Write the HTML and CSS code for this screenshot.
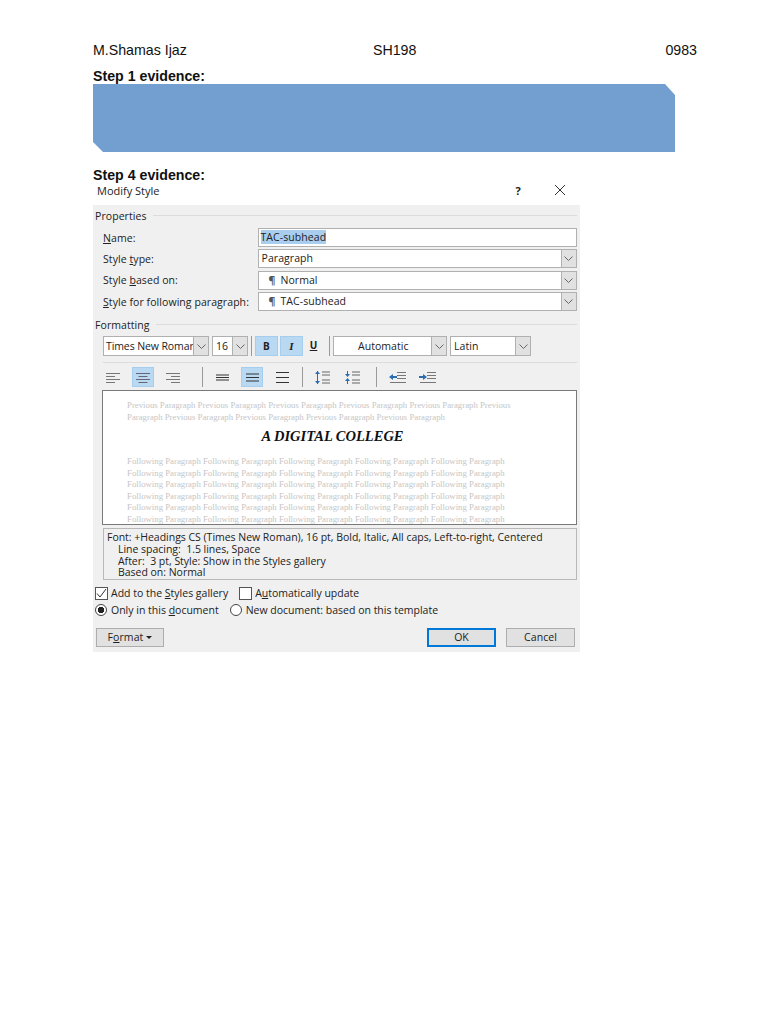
FILE: index.html
```html
<!DOCTYPE html>
<html lang="en">
<head>
<meta charset="utf-8">
<title>Evidence</title>
<link rel="stylesheet" href="styles.css">
</head>
<body>
<main class="page">
  <div class="doc-head"><span>M.Shamas Ijaz</span><span class="doc-mid">SH198</span><span class="doc-end">0983</span></div>
  <h2 class="step step-1">Step 1 evidence:</h2>
  <div class="blue"></div>
  <h2 class="step step-4">Step 4 evidence:</h2>
  <section class="win">
    <div class="titlebar">
      <span>Modify Style</span>
      <span class="help">?</span>
      <svg class="close" width="12" height="12" viewBox="0 0 12 12"><path d="M1 1l10 10M11 1L1 11" stroke="#333" stroke-width="1" fill="none"/></svg>
    </div>
    <div class="dialog">
      <div class="legend legend-1"><span>Properties</span><i></i></div>
      <div class="form">
        <label><u>N</u>ame:</label>
        <div class="field first"><span class="sel">TAC-subhead</span></div>
        <label>Style <u>t</u>ype:</label>
        <div class="field">Paragraph<b class="arrow"><svg width="9" height="5" viewBox="0 0 9 5"><path d="M.5.5l4 4 4-4" stroke="#666" fill="none"/></svg></b></div>
        <label>Style <u>b</u>ased on:</label>
        <div class="field"><span class="pil">¶</span>Normal<b class="arrow"><svg width="9" height="5" viewBox="0 0 9 5"><path d="M.5.5l4 4 4-4" stroke="#666" fill="none"/></svg></b></div>
        <label><u>S</u>tyle for following paragraph:</label>
        <div class="field"><span class="pil">¶</span>TAC-subhead<b class="arrow"><svg width="9" height="5" viewBox="0 0 9 5"><path d="M.5.5l4 4 4-4" stroke="#666" fill="none"/></svg></b></div>
      </div>
      <div class="legend legend-2"><span>Formatting</span><i></i></div>
      <div class="bar1">
        <div class="drop w-font"><span>Times New Romar</span><b class="arrow"><svg width="9" height="5" viewBox="0 0 9 5"><path d="M.5.5l4 4 4-4" stroke="#666" fill="none"/></svg></b></div>
        <div class="drop w-size"><span>16</span><b class="arrow"><svg width="9" height="5" viewBox="0 0 9 5"><path d="M.5.5l4 4 4-4" stroke="#666" fill="none"/></svg></b></div>
        <i class="sep s-a"></i>
        <span class="tb on t-b">B</span>
        <span class="tb on t-i">I</span>
        <span class="tb t-u">U</span>
        <i class="sep s-b"></i>
        <div class="drop w-auto"><span>Automatic</span><b class="arrow"><svg width="9" height="5" viewBox="0 0 9 5"><path d="M.5.5l4 4 4-4" stroke="#666" fill="none"/></svg></b></div>
        <div class="drop w-lang"><span>Latin</span><b class="arrow"><svg width="9" height="5" viewBox="0 0 9 5"><path d="M.5.5l4 4 4-4" stroke="#666" fill="none"/></svg></b></div>
      </div>
      <div class="rule"></div>
      <div class="bar2">
        <span class="ic i1"><svg width="14" height="11" viewBox="0 0 14 11"><path d="M0 1.5h14M0 4.5h9M0 7.5h14M0 10.5h9" stroke="#777"/></svg></span>
        <span class="ic on i2"><svg width="14" height="11" viewBox="0 0 14 11"><path d="M0 1.5h14M2.5 4.5h9M0 7.5h14M2.5 10.5h9" stroke="#667"/></svg></span>
        <span class="ic i3"><svg width="14" height="11" viewBox="0 0 14 11"><path d="M0 1.5h14M5 4.5h9M0 7.5h14M5 10.5h9" stroke="#777"/></svg></span>
        <i class="sep s-c"></i>
        <span class="ic i4"><svg width="13" height="7" viewBox="0 0 13 7"><path d="M0 1h13M0 3.5h13M0 6h13" stroke="#333"/></svg></span>
        <span class="ic on i5"><svg width="13" height="9" viewBox="0 0 13 9"><path d="M0 1h13M0 4.5h13M0 8h13" stroke="#333"/></svg></span>
        <span class="ic i6"><svg width="13" height="11" viewBox="0 0 13 11"><path d="M0 .5h13M0 5.5h13M0 10.5h13" stroke="#333"/></svg></span>
        <i class="sep s-d"></i>
        <span class="ic i7"><svg width="15" height="15" viewBox="0 0 15 15"><path d="M7 2h8M7 5h8M7 10h8M7 13h8" stroke="#666"/><path d="M2.500 1v13" stroke="#2b6cb0"/><path d="M0 4l2.500-3 2.500 3zM0 11l2.500 3 2.500-3z" fill="#2b6cb0"/></svg></span>
        <span class="ic i8"><svg width="15" height="15" viewBox="0 0 15 15"><path d="M7 2h8M7 5h8M7 10h8M7 13h8" stroke="#666"/><path d="M2.500 1v3M2.500 11v3" stroke="#2b6cb0"/><path d="M0 4l2.500 3 2.500-3zM0 11l2.500-3 2.500 3z" fill="#2b6cb0"/></svg></span>
        <i class="sep s-e"></i>
        <span class="ic i9"><svg width="17" height="11" viewBox="0 0 17 11"><path d="M8 .5h9M8 3.500h9M8 6.500h9M1 10.500h16" stroke="#777"/><path d="M8 4H4V2L0 5l4 3V6h4z" fill="#2b6cb0"/></svg></span>
        <span class="ic i10"><svg width="17" height="11" viewBox="0 0 17 11"><path d="M8 .5h9M8 3.500h9M8 6.500h9M1 10.500h16" stroke="#777"/><path d="M0 4h4V2l4 3-4 3V6H0z" fill="#2b6cb0"/></svg></span>
      </div>
      <div class="preview">
        <p class="pv">Previous Paragraph Previous Paragraph Previous Paragraph Previous Paragraph Previous Paragraph Previous<br>Paragraph Previous Paragraph Previous Paragraph Previous Paragraph Previous Paragraph</p>
        <p class="heading">A DIGITAL COLLEGE</p>
        <p class="pv fol">Following Paragraph Following Paragraph Following Paragraph Following Paragraph Following Paragraph<br>Following Paragraph Following Paragraph Following Paragraph Following Paragraph Following Paragraph<br>Following Paragraph Following Paragraph Following Paragraph Following Paragraph Following Paragraph<br>Following Paragraph Following Paragraph Following Paragraph Following Paragraph Following Paragraph<br>Following Paragraph Following Paragraph Following Paragraph Following Paragraph Following Paragraph<br>Following Paragraph Following Paragraph Following Paragraph Following Paragraph Following Paragraph</p>
      </div>
      <div class="desc">
        <div>Font: +Headings CS (Times New Roman), 16 pt, Bold, Italic, All caps, Left-to-right, Centered</div>
        <div class="ind">Line spacing:&nbsp; 1.5 lines, Space</div>
        <div class="ind">After:&nbsp; 3 pt, Style: Show in the Styles gallery</div>
        <div class="ind">Based on: Normal</div>
      </div>
      <div class="opts o1">
        <span class="chk"><svg width="13" height="13" viewBox="0 0 13 13"><path d="M2 6.500l3 3.500 6-8" stroke="#333" fill="none"/></svg></span><span>Add to the <u>S</u>tyles gallery</span>
        <span class="chk c2"></span><span>A<u>u</u>tomatically update</span>
      </div>
      <div class="opts o2">
        <span class="radio sel-r"></span><span>Only in this <u>d</u>ocument</span>
        <span class="radio r2"></span><span>New document: based on this template</span>
      </div>
      <div class="btns">
        <span class="btn fmt">F<u>o</u>rmat<em class="caret"></em></span>
        <span class="btn ok">OK</span>
        <span class="btn cancel">Cancel</span>
      </div>
    </div>
  </section>
</main>
</body>
</html>
```
FILE: styles.css
```css
* { box-sizing: border-box; }
html, body { margin: 0; background: #fff; }
.page { width: 768px; height: 1024px; padding: 42px 0 0 93px; font-family: "Liberation Sans", Arial, sans-serif; color: #111; overflow: hidden; }
.doc-head { display: flex; font-size: 14.2px; line-height: 17px; width: 604px; }
.doc-head span:first-child { width: 280px; }
.doc-end { margin-left: auto; }
.step { margin: 0; font-size: 14.2px; line-height: 17px; font-weight: 700; }
.step-1 { margin-top: 9px; }
.blue { width: 582px; height: 68px; margin-top: -1px; background: #729fcf; clip-path: polygon(0 0, 572px 0, 100% 11px, 100% 100%, 10px 100%, 0 58px); }
.step-4 { margin-top: 15px; }
.win { width: 487px; color: #222; font-family: "Open Sans", "Noto Sans", sans-serif; font-size: 10.5px; }
.titlebar { height: 21px; padding: 0 0 0 4px; line-height: 14px; font-size: 11px; display: flex; }
.help { margin-left: 356px; font-weight: 700; }
.close { margin: 0 0 0 33px; }
.dialog { background: #f0f0f0; height: 447px; padding-top: 3px; letter-spacing: .07px; }
.legend { display: flex; align-items: center; padding-left: 2px; height: 15px; }
.legend i { flex: 1; height: 1px; background: #dcdcdc; margin: 0 3px 0 6px; }
.form { display: grid; grid-template-columns: 154.500px 319px; grid-auto-rows: 19px; row-gap: 2.400px; padding: 5px 0 0 10px; align-items: center; }
.field { height: 19px; background: #fff; border: 1px solid #b0b0b0; padding-left: 3px; line-height: 16px; position: relative; }
.first { padding-left: 2px; }
.sel { background: #a9cdee; }
.pil { margin: 0 5px 0 7px; font-weight: 700; color: #555; }
.arrow { position: absolute; right: 0; top: 0; bottom: 0; width: 15px; background: #e1e1e1; border-left: 1px solid #b0b0b0; display: flex; align-items: center; justify-content: center; }
.legend-2 { margin-top: 6px; }
.bar1 { height: 20px; margin-top: 4px; display: flex; align-items: stretch; }
.drop { position: relative; height: 20px; background: #fff; border: 1px solid #b0b0b0; line-height: 19px; padding-left: 3px; white-space: nowrap; overflow: hidden; letter-spacing: .05px; }
.w-font { width: 106px; margin-left: 10px; padding-left: 2px; letter-spacing: -.1px; }
.w-size { width: 36px; margin-left: 3px; }
.w-auto { width: 114px; margin-left: 3px; padding-left: 24px; }
.w-lang { width: 81px; margin-left: 3px; }
.sep { display: block; width: 1px; background: #9a9a9a; }
.s-a { margin: 0 3px; }
.s-b { margin-left: 4px; }
.tb { width: 23px; text-align: center; line-height: 19px; font-weight: 700; font-size: 10px; margin-right: 2px; }
.tb.on, .ic.on { background: #b9d8f2; border: 1px solid #a5cdee; }
.t-i { font-style: italic; font-family: "Liberation Serif", serif; font-size: 11px; }
.t-u { text-decoration: underline; margin: 0 0 0 -3px; }
.rule { height: 1px; background: #dcdcdc; margin: 6px 3px 0 10px; }
.bar2 { display: flex; height: 20px; margin-top: 4px; padding-left: 9px; align-items: stretch; }
.ic { display: flex; align-items: center; justify-content: center; width: 22px; }
.i2, .i3 { margin-left: 8px; }
.i5, .i6 { margin-left: 8px; }
.i4 { margin-left: 8px; }
.s-c { margin-left: 18px; }
.s-d { margin-left: 9px; }
.s-e { margin-left: 13px; }
.i7 { margin-left: 8px; }
.i8 { margin-left: 8px; }
.i9 { margin-left: 9px; }
.i10 { margin-left: 8px; }
.preview { width: 475px; height: 135px; margin: 3px 0 0 9px; background: #fff; border: 1px solid #7a7a7a; padding: 9px 0 0 24px; font-family: "Liberation Serif", serif; letter-spacing: 0; }
.preview p { margin: 0; }
.pv { font-size: 8.77px; line-height: 11.500px; color: #c6c6c6; white-space: nowrap; }
.preview .heading { font-size: 14.5px; line-height: 16px; font-weight: 700; font-style: italic; color: #111; text-align: center; margin: 5px 0 12px; padding-right: 38px; }
.desc { width: 474px; height: 52px; margin: 3px 0 0 10px; border: 1px solid #b8b8b8; padding: 3px 0 0 3px; line-height: 11.700px; letter-spacing: -.02px; white-space: nowrap; overflow: hidden; }
.ind { padding-left: 11px; }
.opts { display: flex; align-items: center; padding-left: 2px; letter-spacing: 0; }
.o1 { margin-top: 6px; height: 14px; }
.o2 { margin-top: 3px; height: 14px; }
.chk { width: 13px; height: 13px; border: 1px solid #555; background: #fff; margin-right: 3px; display: block; }
.chk svg { display: block; margin: -1px; }
.c2 { margin-left: 11px; }
.radio { width: 12px; height: 12px; border: 1px solid #444; border-radius: 50%; background: #fff; margin-right: 4px; }
.sel-r { background: radial-gradient(circle, #222 0 3px, #fff 3.500px); }
.r2 { margin-left: 11px; }
.btns { display: flex; margin-top: 11px; padding-left: 3px; }
.btn { height: 19px; width: 68px; background: #e1e1e1; border: 1px solid #adadad; text-align: center; line-height: 17px; }
.fmt { margin-right: 263px; }
.ok { width: 69px; border: 2px solid #0078d7; line-height: 15px; margin-right: 10px; }
.cancel { width: 69px; }
.caret { display: inline-block; margin-left: 3px; border: 3px solid transparent; border-top-color: #222; border-bottom: 0; vertical-align: 2px; }
```
